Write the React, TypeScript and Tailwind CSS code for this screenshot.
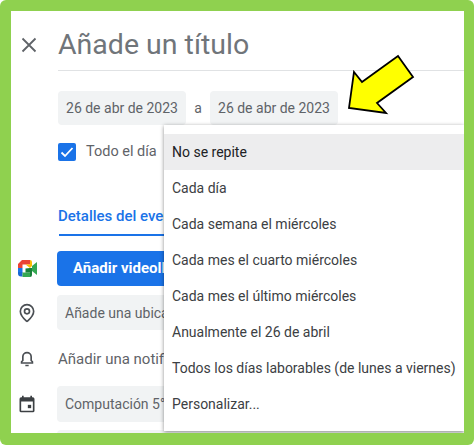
import { MapPin } from 'lucide-react';

const options = [
  'No se repite',
  'Cada día',
  'Cada semana el miércoles',
  'Cada mes el cuarto miércoles',
  'Cada mes el último miércoles',
  'Anualmente el 26 de abril',
  'Todos los días laborables (de lunes a viernes)',
  'Personalizar...',
];

function MeetIcon() {
  return (
    <svg width="20" height="17" viewBox="0 0 20 17">
      <path d="M4 0h8v4.500H4.500V8H0V4z" fill="#ea4335" />
      <path d="M0 8h4.500v4.500H0z" fill="#1a73e8" />
      <path d="M0 12h4.500v4.500H3a3 3 0 0 1-3-3z" fill="#1967d2" />
      <path d="M4.500 12.500H12V17H4.500z" fill="#34a853" />
      <path d="M12 0a2 2 0 0 1 2 2v4l-2 2-4.500-3.500H12z" fill="#fbbc04" />
      <path d="M7.500 8.500l4.500-.500 2 0v7a2 2 0 0 1-2 2v-4.500H7.500z" fill="#188038" />
      <path d="M14 6l5-4v13l-5-4z" fill="#34a853" />
    </svg>
  );
}

function BellIcon() {
  return (
    <svg width="20" height="20" viewBox="0 0 24 24" fill="none" stroke="#4b4f54" strokeWidth="2">
      <path d="M5.500 18v-1.500l1.500-1.500v-4.500a5 5 0 0 1 10 0V15l1.500 1.500V18z" />
      <path d="M10 21h4" />
    </svg>
  );
}

function CalendarIcon() {
  return (
    <svg width="20" height="20" viewBox="0 0 24 24" fill="#3c4043">
      <path d="M19 4h-1V2h-2v2H8V2H6v2H5a2 2 0 0 0-2 2v14a2 2 0 0 0 2 2h14a2 2 0 0 0 2-2V6a2 2 0 0 0-2-2zm0 16H5V9h14z" />
      <rect x="13" y="13" width="4" height="4" />
    </svg>
  );
}

export default function App() {
  return (
    <div className="relative w-[474px] h-[445px] overflow-hidden rounded-md bg-[#8fd14f] pl-[11px] pr-[10px] pt-[11px] pb-[12px] font-['Roboto',sans-serif]">
      <div className="relative h-[422px] overflow-hidden bg-white text-[#5f6368]">
        {/* Title */}
        <div className="flex h-[60px]">
          <div className="flex w-[36px] justify-center pt-[26px]">
            <svg width="16" height="16" viewBox="0 0 16 16" stroke="#5f6368" strokeWidth="1.800">
              <path d="M1.500 1.500l13 13M14.500 1.500l-13 13" />
            </svg>
          </div>
          <div className="ml-[11px] flex-1 border-b border-[#e0e2e4] pt-[12px] text-[28.500px] leading-[43px] text-[#70757a]">
            Añade un título
          </div>
        </div>

        {/* Dates */}
        <div className="mt-[20px] ml-[47px] flex items-center text-[14px] text-[#5f6368]">
          <div className="flex h-[34px] w-[128px] items-center justify-center rounded bg-[#f1f3f4]">26 de abr de 2023</div>
          <div className="w-[24px] text-center">a</div>
          <div className="flex h-[34px] w-[128px] items-center justify-center rounded bg-[#f1f3f4]">26 de abr de 2023</div>
        </div>

        {/* All day */}
        <div className="mt-[18px] ml-[47px] flex h-[18px] items-center text-[14.500px] text-[#5f6368]">
          <div className="flex h-[18px] w-[18px] items-center justify-center rounded-[2px] bg-[#1a73e8]">
            <svg width="14" height="14" viewBox="0 0 14 14" fill="none" stroke="white" strokeWidth="1.800">
              <path d="M1.500 7.500l3.500 3.500 7.500-8" />
            </svg>
          </div>
          <span className="ml-[10px] leading-[18px]">Todo el día</span>
        </div>

        {/* Tabs */}
        <div className="mt-[46px] ml-[47px] w-[106px] text-[15px] font-medium text-[#1a73e8]">
          <div className="h-[19px] whitespace-nowrap leading-[19px]">Detalles del evento</div>
          <div className="mt-[8px] ml-[1px] h-[2px] bg-[#1a73e8]" />
        </div>

        {/* Videocall */}
        <div className="mt-[15px] flex items-center">
          <div className="flex w-[32px] justify-center pl-[1px]">
            <MeetIcon />
          </div>
          <div className="ml-[14px] flex h-[35px] w-[170px] items-center whitespace-nowrap rounded bg-[#1a73e8] pl-[16px] text-[15px] font-bold text-white">
            Añadir videollamada
          </div>
        </div>

        {/* Location */}
        <div className="mt-[9px] flex items-center">
          <div className="flex w-[32px] justify-center">
            <MapPin size={20} color="#4b4f54" strokeWidth={2} />
          </div>
          <div className="ml-[14px] flex h-[35px] flex-1 items-center rounded bg-[#f1f3f4] pl-[8px] pt-[1px] text-[14px]">
            Añade una ubicación
          </div>
        </div>

        {/* Notification */}
        <div className="mt-[10px] flex h-[35px] items-center">
          <div className="flex w-[32px] justify-center">
            <BellIcon />
          </div>
          <span className="ml-[15px] pt-[3px] text-[15px]">Añadir una notificación</span>
        </div>

        {/* Calendar */}
        <div className="mt-[11px] flex items-center">
          <div className="flex w-[32px] justify-center">
            <CalendarIcon />
          </div>
          <div className="ml-[14px] flex h-[36px] flex-1 items-center rounded bg-[#f1f3f4] pl-[8px] pt-[1px] text-[14px]">
            Computación 5°
          </div>
        </div>
        <div className="mt-[8px] ml-[46px] h-[36px] rounded bg-[#f1f3f4]" />

        {/* Recurrence menu */}
        <div className="absolute left-[153px] top-[114px] w-[300px] h-[306px] bg-white pt-[9px] shadow-[0_1px_4px_rgba(0,0,0,0.45)] text-[14px] text-[#3c4043]">
          {options.map((option, i) => (
            <div
              key={option}
              className={`flex h-[36.100px] items-center whitespace-nowrap pl-[8px] ${i === 0 ? 'bg-[#ededee] text-[#202124]' : ''}`}
            >
              {option}
            </div>
          ))}
        </div>
      </div>

      {/* Arrow */}
      <svg className="absolute left-0 top-0" width="474" height="445" viewBox="0 0 474 445">
        <polygon
          points="354,72 362,82 398,56 413,77 377,103 386,113 349,108"
          fill="#ffff00"
          stroke="#000"
          strokeWidth="1.800"
          strokeLinejoin="miter"
        />
      </svg>
    </div>
  );
}
